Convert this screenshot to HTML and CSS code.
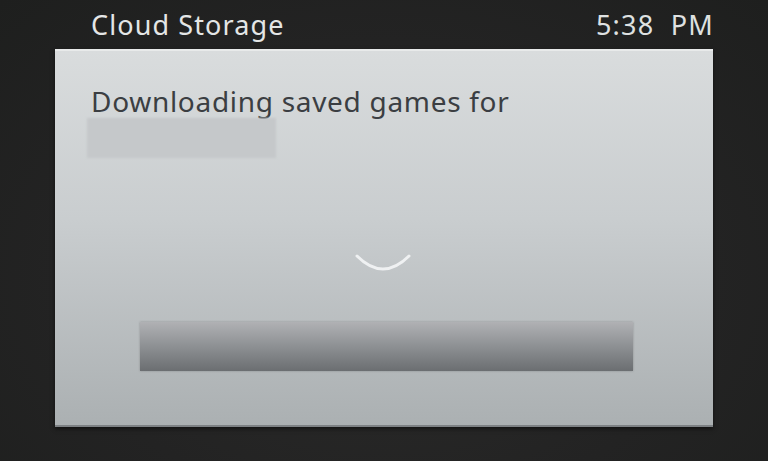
FILE: index.html
```html
<!DOCTYPE html>
<html lang="en">
<head>
  <meta charset="UTF-8" />
  <meta name="viewport" content="width=device-width, initial-scale=1.0" />
  <title>Cloud Storage</title>
  <link rel="stylesheet" href="styles.css">
</head>
<body>
  <div class="screen">
    <div class="header">
      <span class="title">Cloud Storage</span>
      <span class="clock">5:38&nbsp;&nbsp;PM</span>
    </div>

    <div class="panel">
      <p class="message">Downloading saved games for</p>
      <div class="gamertag"></div>

      <div class="spinner">
        <svg width="60" height="30" viewBox="0 0 60 30">
          <path d="M4 4 Q30 30 56 4" fill="none" stroke="#f4f5f6" stroke-width="3" stroke-linecap="round" opacity="0.9" />
        </svg>
      </div>

      <div class="bar"></div>
    </div>
  </div>
</body>
</html>
```

FILE: styles.css
```css
html, body { margin: 0; height: 100%; }
body { background: radial-gradient(ellipse at 50% 60%, #2b2b2a 0%, #232323 60%, #1e1f1e 100%); font-family: "Noto Sans", "Open Sans", sans-serif; overflow: hidden; }
.screen { width: 658px; margin-left: 55px; }
.header { display: flex; justify-content: space-between; align-items: flex-end; height: 49px; padding-left: 36px; box-sizing: border-box; }
.title { color: #e4e6e6; font-size: 27px; line-height: 26px; padding-bottom: 11px; letter-spacing: 1.1px; }
.clock { color: #dfe1e1; font-size: 27px; line-height: 26px; padding-bottom: 11px; letter-spacing: 1.2px; margin-right: -1px; }
.panel { height: 378px; box-sizing: border-box; background: linear-gradient(180deg, #d9dcdd 0%, #c9cdcf 45%, #abb0b2 100%); border-top: 2px solid #e8eaea; border-bottom: 2px solid #7d8184; box-shadow: 0 2px 4px rgba(0,0,0,0.5); padding-top: 34px; }
.message { margin: 0 0 0 36px; color: #3b3e42; font-size: 28px; line-height: 32px; letter-spacing: 0.7px; }
.gamertag { margin: 1px 0 0 32px; width: 189px; height: 40px; background: #c5c8ca; filter: blur(1px); }
.spinner { display: flex; justify-content: center; margin: 94px 0 0 -2px; height: 30px; filter: blur(0.6px); }
.bar { margin: 40px 0 0 85px; width: 493px; height: 49px; background: linear-gradient(180deg, #b0b1b4 0%, #8d9093 50%, #6b6e71 100%); box-shadow: 0 0 2px rgba(80,80,80,0.4); }
```
